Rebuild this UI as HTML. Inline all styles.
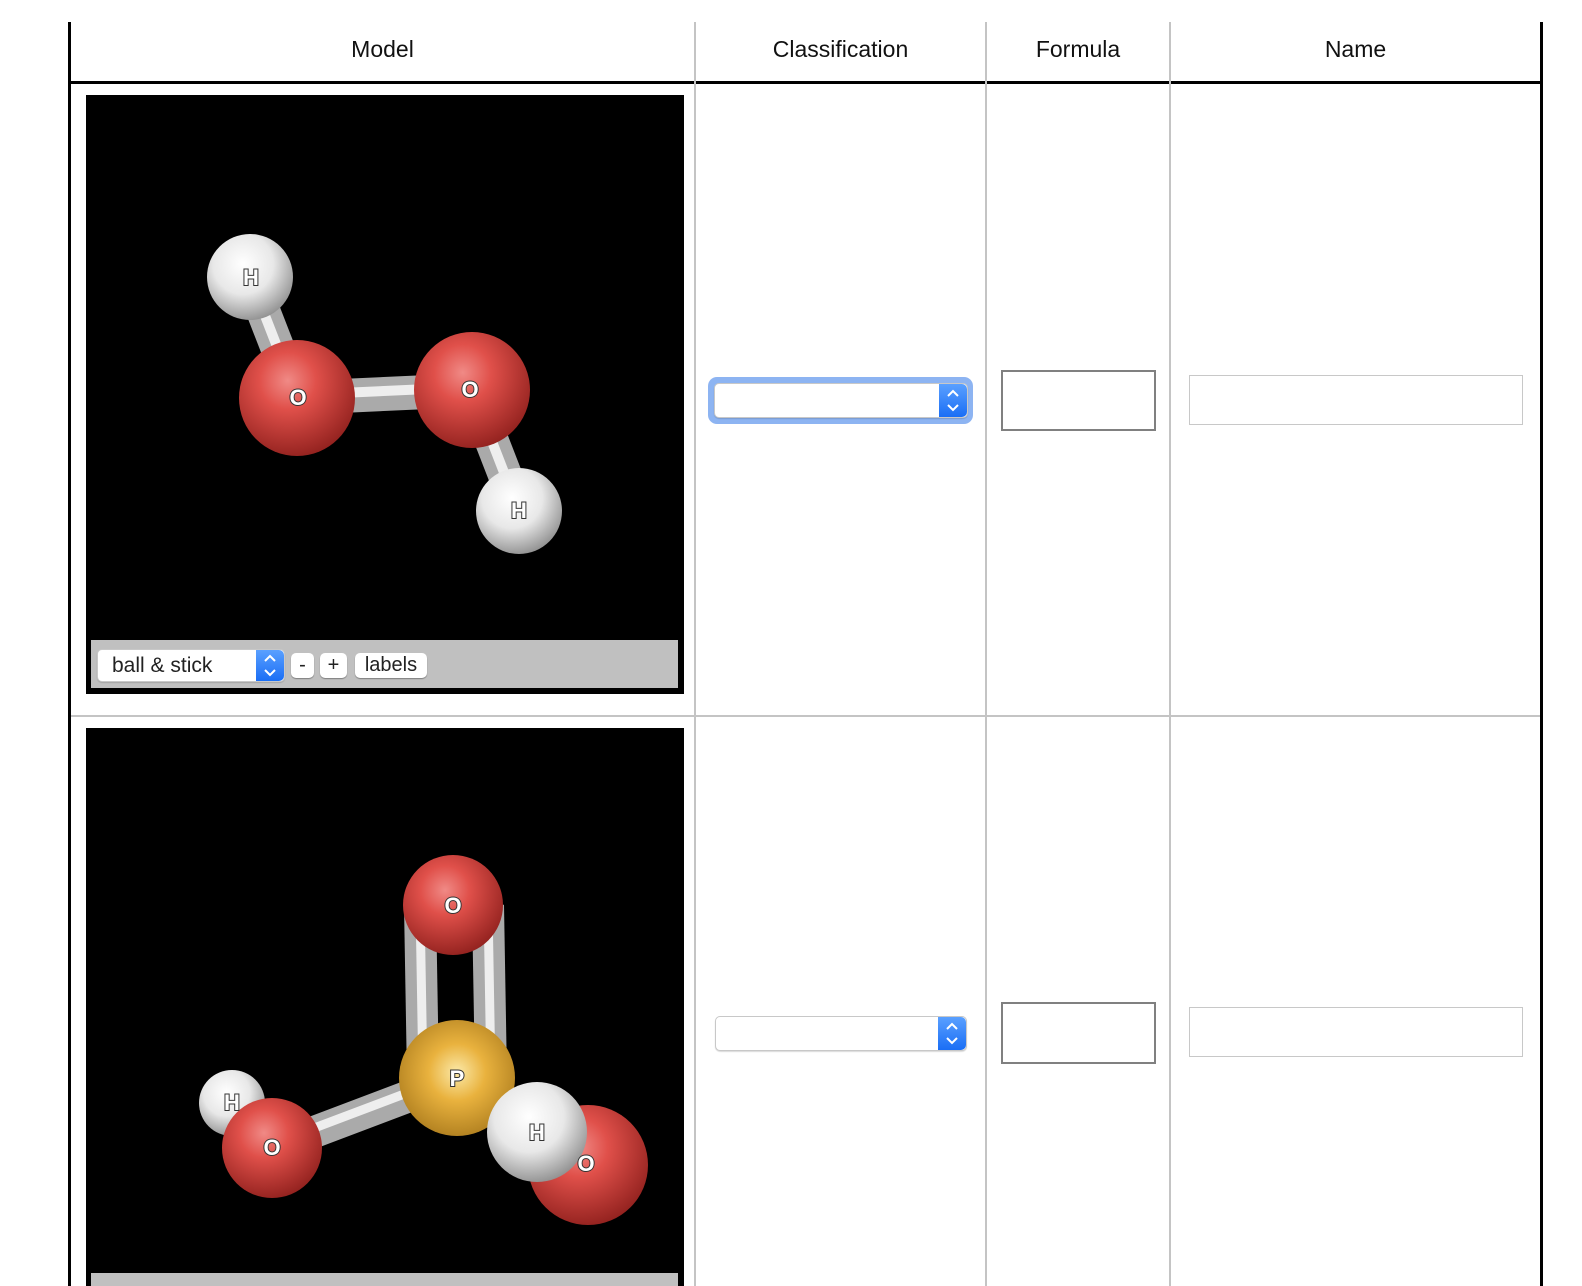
<!DOCTYPE html>
<html><head><style>
body{margin:0;width:1582px;height:1286px;background:#fff;position:relative;overflow:hidden;font-family:"Liberation Sans",sans-serif;}
.a{position:absolute}
.th{position:absolute;top:36px;font-size:23px;color:#111;text-align:center}
.vl{position:absolute;background:#c4c4c4;width:2px}
.sel{position:absolute;background:#fff;border:1px solid #c8c8c8;border-radius:5px;box-shadow:0 1px 1px rgba(0,0,0,.15)}
.arr{position:absolute;right:0;top:0;bottom:0;width:28px;background:linear-gradient(#5aa0ff,#1a6ef5);border-radius:0 5px 5px 0;overflow:hidden}
.btn{position:absolute;top:653px;height:25px;background:#fff;border-radius:5px;box-shadow:0 1px 1px rgba(0,0,0,.35);font-size:20px;color:#222;text-align:center;line-height:24px}
.lbl{font-family:"Liberation Sans",sans-serif;font-weight:bold;fill:#fff;stroke:#333;stroke-width:2;paint-order:stroke;text-anchor:middle}
</style></head><body>
<div class="a" style="left:68px;top:22px;width:3px;height:1264px;background:#000"></div>
<div class="a" style="left:1540px;top:22px;width:3px;height:1264px;background:#000"></div>
<div class="a" style="left:68px;top:81px;width:1475px;height:3px;background:#000"></div>
<div class="vl" style="left:694px;top:22px;height:1264px"></div>
<div class="vl" style="left:985px;top:22px;height:1264px"></div>
<div class="vl" style="left:1169px;top:22px;height:1264px"></div>
<div class="a" style="left:71px;top:715px;width:1469px;height:2px;background:#c4c4c4"></div>
<div class="th" style="left:71px;width:623px">Model</div>
<div class="th" style="left:696px;width:289px">Classification</div>
<div class="th" style="left:987px;width:182px">Formula</div>
<div class="th" style="left:1171px;width:369px">Name</div>

<svg class="a" style="left:86px;top:95px" width="598" height="599">
<defs>
<radialGradient id="r" cx=".42" cy=".35" r=".7"><stop offset="0" stop-color="#f08a86"/><stop offset=".35" stop-color="#e0504a"/><stop offset="1" stop-color="#8e1f1c"/></radialGradient>
<radialGradient id="w" cx=".42" cy=".35" r=".7"><stop offset="0" stop-color="#fff"/><stop offset=".5" stop-color="#e8e8e8"/><stop offset="1" stop-color="#8a8a8a"/></radialGradient>
<radialGradient id="y" cx=".5" cy=".45" r=".7"><stop offset="0" stop-color="#fbe9a8"/><stop offset=".35" stop-color="#e9b23e"/><stop offset="1" stop-color="#9a6c14"/></radialGradient>
</defs>
<rect width="598" height="599" fill="#000"/>
<g stroke="#aaa" stroke-width="34">
<line x1="164" y1="182" x2="211" y2="303"/><line x1="211" y1="303" x2="386" y2="295"/><line x1="386" y1="295" x2="433" y2="416"/></g>
<g stroke="#eee" stroke-width="10">
<line x1="164" y1="182" x2="211" y2="303"/><line x1="211" y1="300" x2="386" y2="292"/><line x1="386" y1="295" x2="433" y2="416"/></g>
<circle cx="164" cy="182" r="43" fill="url(#w)"/>
<circle cx="211" cy="303" r="58" fill="url(#r)"/>
<circle cx="386" cy="295" r="58" fill="url(#r)"/>
<circle cx="433" cy="416" r="43" fill="url(#w)"/>
<text class="lbl" x="165" y="190" font-size="22">H</text>
<text class="lbl" x="212" y="310" font-size="22">O</text>
<text class="lbl" x="384" y="302" font-size="22">O</text>
<text class="lbl" x="433" y="423" font-size="22">H</text>
<rect x="5" y="545" width="587" height="48" fill="#c0c0c0"/>
</svg>
<div class="sel" style="left:97px;top:649px;width:186px;height:31px;font-size:21px;line-height:31px;color:#222"><span style="padding-left:14px">ball &amp; stick</span><div class="arr"><svg width="28" height="31" style="display:block"><path d="M9 11l5-5 5 5M9 20l5 5 5-5" stroke="#fff" stroke-width="2" fill="none"/></svg></div></div>
<div class="btn" style="left:291px;width:23px">-</div>
<div class="btn" style="left:320px;width:27px">+</div>
<div class="btn" style="left:355px;width:72px">labels</div>

<svg class="a" style="left:86px;top:728px" width="598" height="558">
<rect width="598" height="558" fill="#000"/>
<g stroke="#aaa" stroke-width="32">
<line x1="334" y1="177" x2="337" y2="350"/><line x1="402" y1="177" x2="405" y2="350"/><line x1="186" y1="420" x2="371" y2="350"/></g>
<g stroke="#eee" stroke-width="9">
<line x1="334" y1="177" x2="337" y2="350"/><line x1="402" y1="177" x2="405" y2="350"/><line x1="186" y1="416" x2="371" y2="346"/></g>
<line x1="400" y1="370" x2="440" y2="400" stroke="#666" stroke-width="26"/>
<circle cx="146" cy="375" r="33" fill="url(#w)"/>
<circle cx="502" cy="437" r="60" fill="url(#r)"/>
<circle cx="367" cy="177" r="50" fill="url(#r)"/>
<circle cx="371" cy="350" r="58" fill="url(#y)"/>
<circle cx="186" cy="420" r="50" fill="url(#r)"/>
<circle cx="451" cy="404" r="50" fill="url(#w)"/>
<text class="lbl" x="146" y="382" font-size="22">H</text>
<text class="lbl" x="367" y="185" font-size="22">O</text>
<text class="lbl" x="371" y="358" font-size="22">P</text>
<text class="lbl" x="186" y="427" font-size="22">O</text>
<text class="lbl" x="451" y="412" font-size="22">H</text>
<text class="lbl" x="500" y="443" font-size="22">O</text>
<rect x="5" y="545" width="587" height="20" fill="#c0c0c0"/>
</svg>

<div class="a" style="left:708px;top:377px;width:265px;height:47px;border-radius:9px;background:#8db4f2"></div>
<div class="sel" style="left:714px;top:383px;width:252px;height:33px"><div class="arr"><svg width="28" height="33" style="display:block"><path d="M9 12l5-5 5 5M9 21l5 5 5-5" stroke="#fff" stroke-width="2" fill="none"/></svg></div></div>
<div class="a" style="left:1001px;top:370px;width:151px;height:57px;border:2px solid #808080"></div>
<div class="a" style="left:1189px;top:375px;width:332px;height:48px;border:1px solid #c8c8c8"></div>

<div class="sel" style="left:715px;top:1016px;width:250px;height:33px"><div class="arr"><svg width="28" height="33" style="display:block"><path d="M9 12l5-5 5 5M9 21l5 5 5-5" stroke="#fff" stroke-width="2" fill="none"/></svg></div></div>
<div class="a" style="left:1001px;top:1002px;width:151px;height:58px;border:2px solid #808080"></div>
<div class="a" style="left:1189px;top:1007px;width:332px;height:48px;border:1px solid #c8c8c8"></div>
</body></html>
